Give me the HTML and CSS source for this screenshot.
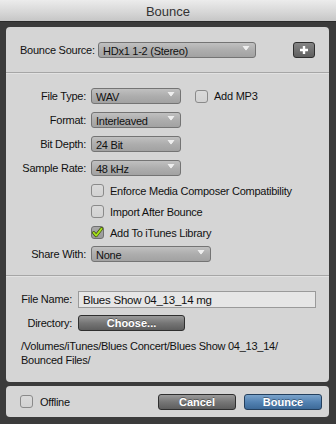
FILE: index.html
```html
<!DOCTYPE html>
<html>
<head>
<meta charset="utf-8">
<link rel="stylesheet" href="styles.css">
</head>
<body>
<div class="win">
  <div class="titlebar">Bounce</div>
  <div class="frame">
    <div class="panel main">
      <div class="sec1">
        <span class="lbl-src">Bounce Source:</span>
        <div class="dd dd-src">HDx1 1-2 (Stereo)<span class="tri"></span></div>
        <div class="plus"><svg width="10" height="10" viewBox="0 0 10 10"><path d="M5 1V9M1 5H9" stroke="#fff" stroke-width="2.4"/></svg></div>
      </div>
      <div class="sep"></div>
      <div class="sec2">
        <div class="row"><span class="lbl">File Type:</span><div class="dd dd-s">WAV<span class="tri"></span></div><span class="cb mp3"></span><span class="cbl">Add MP3</span></div>
        <div class="row"><span class="lbl">Format:</span><div class="dd dd-s">Interleaved<span class="tri"></span></div></div>
        <div class="row"><span class="lbl">Bit Depth:</span><div class="dd dd-s">24 Bit<span class="tri"></span></div></div>
        <div class="row"><span class="lbl">Sample Rate:</span><div class="dd dd-s">48 kHz<span class="tri"></span></div></div>
        <div class="crow"><span class="cb"></span><span class="cbl">Enforce Media Composer Compatibility</span></div>
        <div class="crow"><span class="cb"></span><span class="cbl">Import After Bounce</span></div>
        <div class="crow"><span class="cb on"><svg width="13" height="13" viewBox="0 0 13 13"><path d="M2.6 6.6L5.2 9.6L10.6 2.6" fill="none" stroke="#3a4a10" stroke-width="3.2" stroke-linecap="round" stroke-linejoin="round"/><path d="M2.6 6.6L5.2 9.6L10.6 2.6" fill="none" stroke="#a6e11a" stroke-width="1.8" stroke-linecap="round" stroke-linejoin="round"/></svg></span><span class="cbl">Add To iTunes Library</span></div>
        <div class="row share"><span class="lbl">Share With:</span><div class="dd dd-m">None<span class="tri"></span></div></div>
      </div>
      <div class="sep"></div>
      <div class="sec3">
        <div class="frow"><span class="lbl3">File Name:</span><div class="input">Blues Show 04_13_14 mg</div></div>
        <div class="frow"><span class="lbl3">Directory:</span><div class="btn choose">Choose...</div></div>
        <div class="path">/Volumes/iTunes/Blues Concert/Blues Show 04_13_14/<br>Bounced Files/</div>
      </div>
    </div>
    <div class="panel bottom">
      <span class="cb off"></span><span class="cbl offl">Offline</span>
      <div class="spacer"></div>
      <div class="btn cancel">Cancel</div>
      <div class="btn blue">Bounce</div>
    </div>
  </div>
</div>
</body>
</html>
```

FILE: styles.css
```css
html, body {
  margin: 0;
  padding: 0;
  background: #3a3a3a;
}
body {
  width: 336px;
  height: 424px;
  overflow: hidden;
  font-family: "Liberation Sans", Arial, sans-serif;
  font-size: 11px;
  letter-spacing: -0.25px;
  color: #111;
  white-space: nowrap;
}
.win {
  width: 336px;
  height: 424px;
  background: #3b3b3b;
}
.titlebar {
  height: 22px;
  line-height: 23px;
  text-align: center;
  font-size: 13px;
  letter-spacing: 0;
  color: #333;
  background: linear-gradient(#ececec, #d6d6d6 60%, #c6c6c6);
  border-bottom: 1px solid #2a2a2a;
  box-sizing: border-box;
}
.frame {
  padding: 5px 7px 7px 6px;
  display: flex;
  flex-direction: column;
  gap: 4px;
}
.panel {
  background: #d5d5d5;
  border-radius: 4px;
}
.main {
  height: 355px;
  display: flex;
  flex-direction: column;
}
.sec1 {
  height: 45px;
  display: flex;
  align-items: center;
  padding: 1px 0 0 14px;
  box-sizing: border-box;
}
.lbl-src {
  width: 78px;
}
.dd {
  position: relative;
  height: 16px;
  line-height: 16px;
  box-sizing: border-box;
  border: 1px solid #747474;
  border-radius: 3px;
  background: linear-gradient(#c0c0c0, #acacac 55%, #a2a2a2);
  padding-left: 4px;
  color: #111;
}
.tri {
  position: absolute;
  right: 5px;
  top: 3px;
  width: 0;
  height: 0;
  border-left: 4px solid transparent;
  border-right: 4px solid transparent;
  border-top: 5px solid #eeeeee;
  filter: drop-shadow(0 0 0.6px #555);
}
.dd-src {
  width: 158px;
}
.plus {
  margin-left: 37px;
  width: 22px;
  height: 16px;
  box-sizing: border-box;
  border: 1px solid #2e2e2e;
  border-radius: 3px;
  background: linear-gradient(#858585, #5f5f5f);
  display: flex;
  align-items: center;
  justify-content: center;
}
.sep {
  height: 1px;
  background: #a6a6a6;
  border-bottom: 1px solid #e2e2e2;
}
.sec2 {
  height: 201px;
  padding-top: 14px;
  box-sizing: border-box;
  display: flex;
  flex-direction: column;
}
.row {
  height: 16px;
  display: flex;
  align-items: center;
  margin-bottom: 8px;
}
.lbl {
  width: 80px;
  text-align: right;
  margin-right: 5px;
}
.dd-s {
  width: 90px;
}
.dd-m {
  width: 120px;
}
.cb {
  width: 13px;
  height: 13px;
  box-sizing: border-box;
  border: 1px solid #8a8a8a;
  border-radius: 3px;
  background: linear-gradient(#dadada, #d2d2d2);
  flex: none;
  position: relative;
}
.cb.on {
  background: linear-gradient(#a8a8a8, #9a9a9a);
  border-color: #707070;
}
.cb.on svg {
  position: absolute;
  left: -1px;
  top: -1px;
}
.mp3 {
  margin-left: 14px;
}
.cbl {
  margin-left: 6px;
}
.crow {
  height: 13px;
  display: flex;
  align-items: center;
  padding-left: 85px;
  margin-bottom: 8px;
}
.share {
  margin-top: -1px;
}
.sec3 {
  padding-top: 14px;
  box-sizing: border-box;
  flex: 1;
}
.frow {
  height: 16px;
  display: flex;
  align-items: center;
  margin-bottom: 8px;
}
.lbl3 {
  width: 66px;
  text-align: right;
  margin-right: 6px;
}
.input {
  width: 238px;
  height: 17px;
  line-height: 16px;
  box-sizing: border-box;
  border: 1px solid #9a9a9a;
  background: #e6e6e6;
  padding-left: 4px;
  font-size: 11.5px;
}
.btn {
  height: 16px;
  line-height: 14px;
  box-sizing: border-box;
  border: 1px solid #2f2f2f;
  border-radius: 3px;
  background: linear-gradient(#9a9a9a, #767676 50%, #5e5e5e);
  color: #fff;
  font-weight: bold;
  letter-spacing: 0;
  text-align: center;
  text-shadow: 0 -1px 0 rgba(0,0,0,0.35);
}
.choose {
  width: 107px;
}
.path {
  padding-left: 15px;
  line-height: 14px;
  margin-top: 6px;
}
.bottom {
  height: 31px;
  display: flex;
  align-items: center;
  padding: 0 7px 0 14px;
}
.offl {
  margin-left: 7px;
}
.spacer {
  flex: 1;
}
.cancel {
  width: 78px;
}
.blue {
  width: 78px;
  margin-left: 8px;
  border-color: #24405e;
  background: linear-gradient(#7aa3cb, #5382b2 50%, #3d6a98);
}
```
